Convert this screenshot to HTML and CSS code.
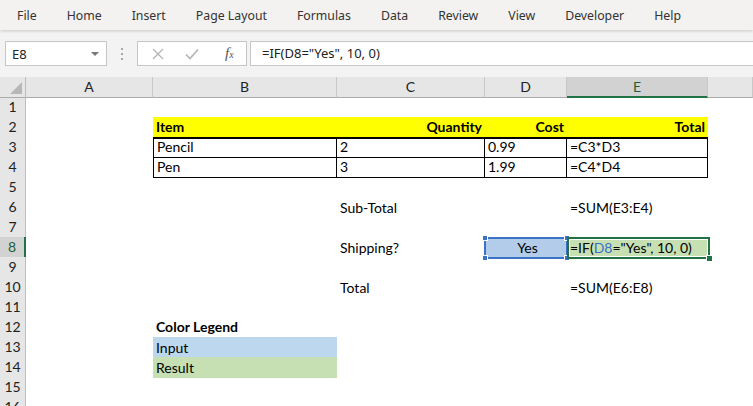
FILE: index.html
```html
<!DOCTYPE html>
<html lang="en">
<head>
  <meta charset="UTF-8">
  <meta name="viewport" content="width=device-width, initial-scale=1.0">
  <title>Shipping formula</title>
  <link rel="stylesheet" href="styles.css">
</head>
<body>
  <div class="ribbon">
    <span class="tab">File</span>
    <span class="tab">Home</span>
    <span class="tab">Insert</span>
    <span class="tab">Page Layout</span>
    <span class="tab">Formulas</span>
    <span class="tab">Data</span>
    <span class="tab">Review</span>
    <span class="tab">View</span>
    <span class="tab">Developer</span>
    <span class="tab">Help</span>
  </div>

  <div class="formula-bar">
    <div class="name-box">
      <span>E8</span>
      <span class="arrow"></span>
    </div>
    <div class="grip">
      <i></i><i></i><i></i>
    </div>
    <div class="fx-buttons">
      <svg class="icon" width="12" height="12" viewBox="0 0 12 12">
        <path d="M1 1 L11 11 M11 1 L1 11" stroke="#b4b4b4" stroke-width="1.3" fill="none"/>
      </svg>
      <svg class="icon" width="14" height="12" viewBox="0 0 14 12">
        <path d="M1 6.5 L5 10.5 L13 1.5" stroke="#b4b4b4" stroke-width="1.6" fill="none"/>
      </svg>
      <span class="fx">f<sub>x</sub></span>
    </div>
    <div class="formula-input">=IF(D8="Yes", 10, 0)</div>
  </div>

  <div class="sheet">
    <div class="row col-heads">
      <div class="corner"><span></span></div>
      <div class="ch">A</div>
      <div class="ch">B</div>
      <div class="ch">C</div>
      <div class="ch">D</div>
      <div class="ch active">E</div>
      <div class="ch"></div>
    </div>

    <div class="row"><div class="rh">1</div><div></div><div></div><div></div><div></div><div></div><div></div></div>
    <div class="row">
      <div class="rh">2</div><div></div>
      <div class="cell head yellow">Item</div>
      <div class="cell head yellow right">Quantity</div>
      <div class="cell head yellow right">Cost</div>
      <div class="cell head yellow right">Total</div>
      <div></div>
    </div>
    <div class="row">
      <div class="rh">3</div><div></div>
      <div class="cell box first">Pencil</div>
      <div class="cell box">2</div>
      <div class="cell box">0.99</div>
      <div class="cell box">=C3*D3</div>
      <div></div>
    </div>
    <div class="row">
      <div class="rh">4</div><div></div>
      <div class="cell box first">Pen</div>
      <div class="cell box">3</div>
      <div class="cell box">1.99</div>
      <div class="cell box">=C4*D4</div>
      <div></div>
    </div>
    <div class="row"><div class="rh">5</div><div></div><div></div><div></div><div></div><div></div><div></div></div>
    <div class="row">
      <div class="rh">6</div><div></div><div></div>
      <div class="cell">Sub-Total</div>
      <div></div>
      <div class="cell">=SUM(E3:E4)</div>
      <div></div>
    </div>
    <div class="row"><div class="rh">7</div><div></div><div></div><div></div><div></div><div></div><div></div></div>
    <div class="row">
      <div class="rh active">8</div><div></div><div></div>
      <div class="cell">Shipping?</div>
      <div class="cell input center ref">
        Yes
        <span class="ref-box">
          <i class="h tl"></i><i class="h tr"></i><i class="h bl"></i><i class="h br"></i>
        </span>
      </div>
      <div class="cell result current">
        =IF(<span class="ref-text">D8</span>="Yes", 10, 0)
        <span class="cur-box"><i class="fill-handle"></i></span>
      </div>
      <div></div>
    </div>
    <div class="row"><div class="rh">9</div><div></div><div></div><div></div><div></div><div></div><div></div></div>
    <div class="row">
      <div class="rh">10</div><div></div><div></div>
      <div class="cell">Total</div>
      <div></div>
      <div class="cell">=SUM(E6:E8)</div>
      <div></div>
    </div>
    <div class="row"><div class="rh">11</div><div></div><div></div><div></div><div></div><div></div><div></div></div>
    <div class="row">
      <div class="rh">12</div><div></div>
      <div class="cell head">Color Legend</div>
      <div></div><div></div><div></div><div></div>
    </div>
    <div class="row">
      <div class="rh">13</div><div></div>
      <div class="cell input">Input</div>
      <div></div><div></div><div></div><div></div>
    </div>
    <div class="row">
      <div class="rh">14</div><div></div>
      <div class="cell result">Result</div>
      <div></div><div></div><div></div><div></div>
    </div>
    <div class="row"><div class="rh">15</div><div></div><div></div><div></div><div></div><div></div><div></div></div>
    <div class="row"><div class="rh">16</div><div></div><div></div><div></div><div></div><div></div><div></div></div>
  </div>
</body>
</html>
```

FILE: styles.css
```css
* {
  box-sizing: border-box;
}

body {
  margin: 0;
  width: 753px;
  height: 406px;
  overflow: hidden;
  background: #f3f3f3;
  font-family: 'Noto Sans', 'Open Sans', sans-serif;
}

/* ruban */
.ribbon {
  height: 30px;
  display: flex;
  align-items: center;
  gap: 30px;
  padding-left: 17px;
  background: #f3f2f1;
  font-size: 12.3px;
  color: #333;
  box-shadow: 0 1px 3px rgba(0, 0, 0, 0.18);
  position: relative;
}

/* barre de formule */
.formula-bar {
  height: 47px;
  display: flex;
  align-items: flex-start;
  padding-top: 11px;
  padding-left: 5px;
}
.name-box {
  width: 102px;
  height: 25px;
  background: #fff;
  border: 1px solid #c6c6c6;
  display: flex;
  align-items: center;
  justify-content: space-between;
  padding: 0 7px 0 6px;
  font-size: 13px;
  color: #222;
}
.arrow {
  width: 0;
  height: 0;
  border-left: 4px solid transparent;
  border-right: 4px solid transparent;
  border-top: 4px solid #777;
}
.grip {
  width: 30px;
  height: 25px;
  display: flex;
  flex-direction: column;
  align-items: center;
  justify-content: center;
  gap: 3px;
}
.grip i {
  width: 2px;
  height: 2px;
  background: #a8a8a8;
}
.fx-buttons {
  width: 110px;
  height: 25px;
  background: #fff;
  border: 1px solid #c6c6c6;
  display: flex;
  align-items: center;
  padding-left: 14px;
  gap: 21px;
}
.fx {
  font-family: 'Liberation Serif', serif;
  font-style: italic;
  font-size: 15px;
  color: #555;
  margin-left: 5px;
}
.fx sub {
  font-size: 10px;
  vertical-align: 0;
}
.formula-input {
  flex: 1;
  height: 25px;
  margin-left: 3px;
  background: #fff;
  border: 1px solid #c6c6c6;
  border-right: none;
  padding-left: 11px;
  font-size: 13px;
  line-height: 23px;
  color: #222;
}

/* feuille */
.sheet {
  background: #fff;
  font-family: Lato, 'Liberation Sans', sans-serif;
  font-size: 14px;
  color: #000;
}
.row {
  display: grid;
  grid-template-columns: 26px 127px 184px 148px 82px 141px 1fr;
  height: 20px;
}
.col-heads {
  background: #e6e6e6;
}
.corner {
  border-right: 1px solid #bdbdbd;
  border-bottom: 1px solid #ababab;
  position: relative;
}
.corner span {
  position: absolute;
  right: 3px;
  bottom: 3px;
  width: 0;
  height: 0;
  border-left: 12px solid transparent;
  border-bottom: 12px solid #b7b7b7;
}
.ch {
  border-right: 1px solid #c8c8c8;
  border-bottom: 1px solid #ababab;
  text-align: center;
  line-height: 19px;
  color: #222;
}
.ch.active {
  background: #d2d2d2;
  border-bottom: 2px solid #217346;
  color: #1d5f3a;
}
.rh {
  background: #e6e6e6;
  border-right: 1px solid #bdbdbd;
  border-bottom: 1px solid #cfcfcf;
  text-align: center;
  line-height: 20px;
  color: #222;
}
.rh.active {
  background: #d2d2d2;
  border-right: 2px solid #217346;
  color: #1d5f3a;
}

.cell {
  padding-left: 3px;
  line-height: 21px;
  white-space: nowrap;
  position: relative;
}
.cell.head {
  font-weight: bold;
  border-bottom: 2px solid #000;
  line-height: 20px;
}
.cell.yellow {
  background: #ffff00;
}
.cell.right {
  text-align: right;
  padding-right: 3px;
}
.cell.center {
  text-align: center;
}
.cell.box {
  border-right: 1px solid #000;
  border-bottom: 1px solid #000;
  line-height: 20px;
}
.cell.box.first {
  border-left: 1px solid #000;
}
.cell.input {
  background: #bdd7ee;
}
.cell.input.ref {
  background: #b3cce9;
}
.cell.result {
  background: #c6e0b4;
}
.ref-text {
  color: #3b6fc9;
}

/* sélection */
.ref-box {
  position: absolute;
  top: 0;
  left: -1px;
  right: -1px;
  bottom: -1px;
  border: 2px solid #3c71c6;
}
.h {
  position: absolute;
  width: 6px;
  height: 6px;
  background: #3c71c6;
  border: 1px solid #fff;
}
.h.tl { top: -4px; left: -4px; }
.h.tr { top: -4px; right: -4px; }
.h.bl { bottom: -4px; left: -4px; }
.h.br { bottom: -4px; right: -4px; }

.cur-box {
  position: absolute;
  top: 0;
  left: 0;
  right: -2px;
  bottom: -1px;
  border: 2px solid #217346;
  box-shadow: inset 0 0 0 1px #fff;
}
.fill-handle {
  position: absolute;
  right: -5px;
  bottom: -5px;
  width: 7px;
  height: 7px;
  background: #217346;
  border: 1px solid #fff;
}
```
